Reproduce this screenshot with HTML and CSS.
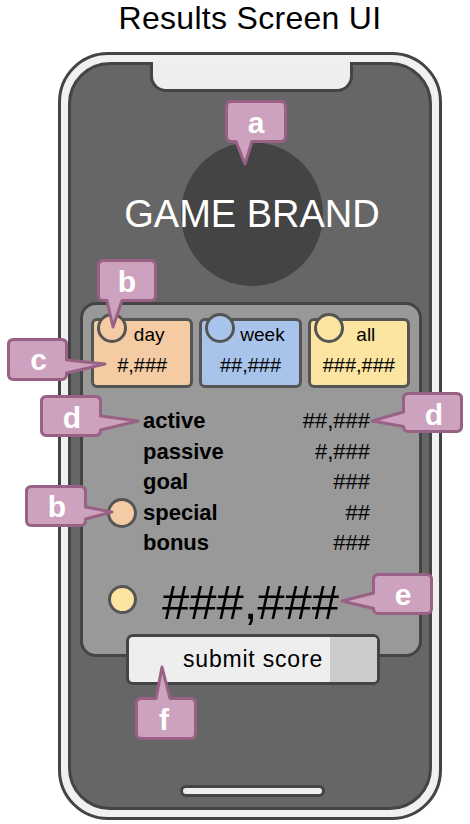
FILE: index.html
```html
<!DOCTYPE html>
<html lang="en">

<head>
    <meta charset="UTF-8">
    <meta name="viewport" content="width=device-width, initial-scale=1.0">
    <title>Results Screen UI</title>

    <link rel="stylesheet" href="styles.css">
</head>

<body>

    <h1 class="title">Results Screen UI</h1>

    <div class="phone">
        <div class="screen">
            <div class="notch"></div>

            <div class="brand"><span>GAME BRAND</span></div>

            <div class="panel">
                <div class="tabs">
                    <div class="tab tab-day">
                        <span class="dot"></span>
                        <div class="tab-name">day</div>
                        <div class="tab-num">#,###</div>
                    </div>
                    <div class="tab tab-week">
                        <span class="dot"></span>
                        <div class="tab-name">week</div>
                        <div class="tab-num">##,###</div>
                    </div>
                    <div class="tab tab-all">
                        <span class="dot"></span>
                        <div class="tab-name">all</div>
                        <div class="tab-num">###,###</div>
                    </div>
                </div>

                <div class="stats">
                    <span></span><span class="stat-name">active</span><span class="stat-val">##,###</span>
                    <span></span><span class="stat-name">passive</span><span class="stat-val">#,###</span>
                    <span></span><span class="stat-name">goal</span><span class="stat-val">###</span>
                    <span class="dot dot-peach"></span><span class="stat-name">special</span><span class="stat-val">##</span>
                    <span></span><span class="stat-name">bonus</span><span class="stat-val">###</span>
                </div>

                <div class="total">
                    <span class="dot dot-yellow"></span>
                    <span class="total-num">###,###</span>
                </div>
            </div>

            <button class="submit"><span class="submit-label">submit score</span><span class="submit-end"></span></button>

            <div class="home-bar"></div>
        </div>
    </div>

    <!-- callout tags -->
    <svg class="callouts" width="470" height="824" viewBox="0 0 470 824">
        <g class="tag">
            <path d="M231.5,101.5 H280.5 Q285.5,101.5 285.5,106.5 V136.5 Q285.5,141.5 280.5,141.5 H252 L245,164 L236,141.5 H231.5 Q226.5,141.5 226.5,136.5 V106.5 Q226.5,101.5 231.5,101.5 Z" />
            <text x="256" y="133">a</text>
        </g>
        <g class="tag">
            <path d="M103.5,260.5 H150.5 Q155.5,260.5 155.5,265.5 V295.5 Q155.5,300.5 150.5,300.5 H122 L113,327 L107,300.5 H103.5 Q98.5,300.5 98.5,295.5 V265.5 Q98.5,260.5 103.5,260.5 Z" />
            <text x="127" y="292">b</text>
        </g>
        <g class="tag">
            <path d="M13.5,339.5 H61.5 Q66.5,339.5 66.5,344.5 V360 L105,364 L66.5,373 V374.5 Q66.5,379.5 61.5,379.5 H13.5 Q8.5,379.5 8.5,374.5 V344.5 Q8.5,339.5 13.5,339.5 Z" />
            <text x="38.5" y="370">c</text>
        </g>
        <g class="tag">
            <path d="M46.5,396.5 H95.5 Q100.5,396.5 100.5,401.5 V416 L138,421 L100.5,430 V430.5 Q100.5,435.5 95.5,435.5 H46.5 Q41.5,435.5 41.5,430.5 V401.5 Q41.5,396.5 46.5,396.5 Z" />
            <text x="72" y="428">d</text>
        </g>
        <g class="tag">
            <path d="M408.5,393.5 H456.5 Q461.5,393.5 461.5,398.5 V426.5 Q461.5,431.5 456.5,431.5 H408.5 Q403.5,431.5 403.5,426.5 L372,421 L403.5,412 V398.5 Q403.5,393.5 408.5,393.5 Z" />
            <text x="434" y="425">d</text>
        </g>
        <g class="tag">
            <path d="M31.5,486.5 H80.5 Q85.5,486.5 85.5,491.5 V507 L112,512 L85.5,519 V520.5 Q85.5,525.5 80.5,525.5 H31.5 Q26.5,525.5 26.5,520.5 V491.5 Q26.5,486.5 31.5,486.5 Z" />
            <text x="57" y="517">b</text>
        </g>
        <g class="tag">
            <path d="M378.5,574.5 H426.5 Q431.5,574.5 431.5,579.5 V608.5 Q431.5,613.5 426.5,613.5 H378.5 Q373.5,613.5 373.5,608.5 L342,601 L373.5,593 V579.5 Q373.5,574.5 378.5,574.5 Z" />
            <text x="403" y="605">e</text>
        </g>
        <g class="tag">
            <path d="M141.5,698.5 H156 L162,667 L170,698.5 H190.5 Q195.5,698.5 195.5,703.5 V733.5 Q195.5,738.5 190.5,738.5 H141.5 Q136.5,738.5 136.5,733.5 V703.5 Q136.5,698.5 141.5,698.5 Z" />
            <text x="164" y="730">f</text>
        </g>
    </svg>

</body>

</html>
```

FILE: styles.css
```css
body {
    position: relative;
    margin: 0;
    width: 470px;
    height: 824px;
    overflow: hidden;
    background-color: white;
    font-family: "Liberation Sans", Arial, sans-serif;
}

.title {
    width: 384px;
    margin: 0 0 0 58px;
    font-size: 32px;
    font-weight: normal;
    line-height: 37px;
    letter-spacing: 0.3px;
    text-align: center;
    color: black;
}

/* phone body */
.phone {
    box-sizing: border-box;
    width: 384px;
    height: 768px;
    margin: 15px 0 0 58px;
    padding: 7px;
    background-color: #f0f0f0;
    border: 3px solid #444444;
    border-radius: 50px;
}

.screen {
    box-sizing: border-box;
    display: flex;
    flex-direction: column;
    align-items: flex-start;
    height: 100%;
    background-color: #666666;
    border: 3px solid #444444;
    border-radius: 42px;
}

.notch {
    box-sizing: border-box;
    width: 203px;
    height: 30px;
    margin: -3px 0 0 79px;
    background-color: #eeeeee;
    border: 3px solid #444444;
    border-top: none;
    border-radius: 0 0 16px 16px;
}

.brand {
    display: flex;
    justify-content: center;
    align-items: center;
    width: 142px;
    height: 144px;
    margin: 50px 0 0 110px;
    background-color: #444444;
    border-radius: 50%;
}

.brand span {
    flex-shrink: 0;
    white-space: nowrap;
    font-size: 38px;
    color: white;
}

/* results panel */
.panel {
    box-sizing: border-box;
    width: 342px;
    height: 355px;
    margin: 16px 0 0 9px;
    background-color: #999999;
    border: 3px solid #444444;
    border-radius: 16px;
}

.tabs {
    display: grid;
    grid-template-columns: repeat(3, 1fr);
    column-gap: 6px;
    padding: 13px 9px 0 8px;
}

.tab {
    position: relative;
    box-sizing: border-box;
    height: 70px;
    padding-top: 3px;
    border: 3px solid #555555;
    border-radius: 6px;
    text-align: center;
    color: black;
}

.tab-day {
    background-color: #f4cba2;
}

.tab-week {
    background-color: #a9c4eb;
}

.tab-all {
    background-color: #fbe5a0;
}

.tab .dot {
    position: absolute;
    left: 3px;
    top: -8px;
    background-color: inherit;
}

.tab-name {
    padding-left: 14px;
    font-size: 19px;
    line-height: 22px;
}

.tab-week .tab-name {
    padding-left: 24px;
}

.tab-num {
    margin-top: 4px;
    font-size: 20px;
    line-height: 30px;
}

.dot {
    box-sizing: border-box;
    display: block;
    width: 30px;
    height: 30px;
    border: 3px solid #555555;
    border-radius: 50%;
}

.dot-peach {
    background-color: #f4cba2;
}

.dot-yellow {
    width: 29px;
    height: 29px;
    background-color: #fbe5a0;
}

.stats {
    display: grid;
    grid-template-columns: 30px 1fr auto;
    column-gap: 6px;
    align-items: center;
    margin: 18px 49px 0 0;
    padding-left: 24px;
    font-size: 22px;
    line-height: 30.5px;
    color: black;
}

.stat-name {
    font-weight: bold;
}

.stat-val {
    text-align: right;
}

.total {
    display: flex;
    align-items: center;
    gap: 25px;
    margin-top: 15px;
    padding-left: 25px;
}

.total .dot {
    margin-bottom: 4px;
}

.total-num {
    font-size: 49px;
    line-height: 56px;
    color: black;
}

/* submit button sits over the panel edge */
.submit {
    box-sizing: border-box;
    display: flex;
    width: 254px;
    height: 51px;
    margin: -23px 0 0 55px;
    padding: 0;
    overflow: hidden;
    background-color: #eeeeee;
    border: 3px solid #444444;
    border-radius: 7px;
    font-family: inherit;
}

.submit-label {
    flex: 1;
    padding-right: 7px;
    font-size: 23px;
    line-height: 45px;
    letter-spacing: 0.8px;
    text-align: right;
    color: black;
}

.submit-end {
    width: 47px;
    background-color: #cccccc;
}

.home-bar {
    box-sizing: border-box;
    width: 145px;
    height: 12px;
    margin: auto 0 10px 109px;
    background-color: #eeeeee;
    border: 3px solid #444444;
    border-radius: 6px;
}

/* annotation tags */
.callouts {
    position: absolute;
    left: 0;
    top: 0;
    pointer-events: none;
}

.tag path {
    fill: #cda2be;
    stroke: #996185;
    stroke-width: 3;
    stroke-linejoin: round;
}

.tag text {
    font-family: "Liberation Sans", Arial, sans-serif;
    font-size: 30px;
    font-weight: bold;
    fill: white;
    text-anchor: middle;
}
```
